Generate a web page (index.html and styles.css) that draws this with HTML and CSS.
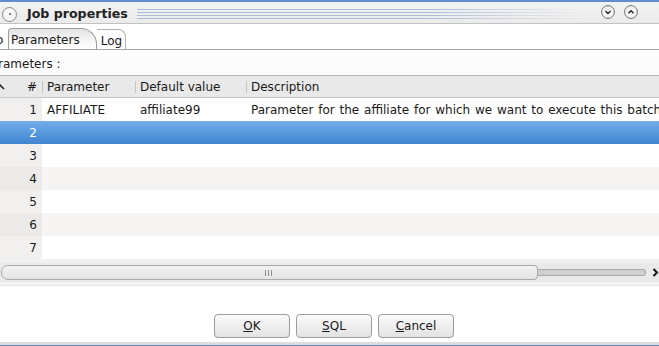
FILE: index.html
```html
<!DOCTYPE html>
<html>
<head>
<meta charset="utf-8">
<link rel="stylesheet" href="styles.css">
</head>
<body>
<div class="window">
  <div class="titlebar">
    <span class="menu-btn"><span class="dot"></span></span>
    <span class="title">Job properties</span>
    <span class="stripes"></span>
    <span class="circ-btn">
      <svg width="14" height="14" viewBox="0 0 14 14"><circle cx="7" cy="7" r="6.4" fill="#f4f4f4" stroke="#6e6e6e"/><path d="M4.5 6 L7 8.5 L9.5 6" fill="none" stroke="#222" stroke-width="1.4"/></svg>
    </span>
    <span class="circ-btn">
      <svg width="14" height="14" viewBox="0 0 14 14"><circle cx="7" cy="7" r="6.4" fill="#f4f4f4" stroke="#6e6e6e"/><path d="M4.5 8.3 L7 5.8 L9.5 8.3" fill="none" stroke="#222" stroke-width="1.4"/></svg>
    </span>
  </div>
  <div class="tabbar">
    <span class="tab tab-cut">o</span>
    <span class="tab tab-active">Parameters</span>
    <span class="tab tab-log">Log</span>
  </div>
  <div class="label"><span class="label-text">Parameters :</span></div>
  <div class="table">
    <div class="row head">
      <div class="cell rh"><svg class="sort" width="6" height="6" viewBox="0 0 6 6"><path d="M0 0 L5 5" stroke="#222" stroke-width="1.6"/></svg>#</div>
      <div class="cell hc">Parameter</div>
      <div class="cell hc">Default value</div>
      <div class="cell hc">Description</div>
    </div>
    <div class="row">
      <div class="cell rh">1</div>
      <div class="cell">AFFILIATE</div>
      <div class="cell">affiliate99</div>
      <div class="cell desc">Parameter for the affiliate for which we want to execute this batch</div>
    </div>
    <div class="row sel">
      <div class="cell rh">2</div><div class="cell"></div><div class="cell"></div><div class="cell"></div>
    </div>
    <div class="row">
      <div class="cell rh">3</div><div class="cell"></div><div class="cell"></div><div class="cell"></div>
    </div>
    <div class="row alt">
      <div class="cell rh">4</div><div class="cell"></div><div class="cell"></div><div class="cell"></div>
    </div>
    <div class="row">
      <div class="cell rh">5</div><div class="cell"></div><div class="cell"></div><div class="cell"></div>
    </div>
    <div class="row alt">
      <div class="cell rh">6</div><div class="cell"></div><div class="cell"></div><div class="cell"></div>
    </div>
    <div class="row">
      <div class="cell rh">7</div><div class="cell"></div><div class="cell"></div><div class="cell"></div>
    </div>
  </div>
  <div class="hscroll">
    <div class="thumb"><span class="grip"></span></div>
    <div class="groove"></div>
    <svg class="sarrow" width="7" height="9" viewBox="0 0 7 9"><path d="M1.5 1 L5 4.5 L1.5 8" fill="none" stroke="#111" stroke-width="2"/></svg>
  </div>
  <div class="buttons">
    <button class="btn"><u>O</u>K</button>
    <button class="btn"><u>S</u>QL</button>
    <button class="btn"><u>C</u>ancel</button>
  </div>
  <div class="bottom"></div>
</div>
</body>
</html>
```
FILE: styles.css
```css
html, body {
  margin: 0;
  padding: 0;
  background: #ffffff;
  overflow: hidden;
}
body {
  width: 659px;
  height: 346px;
  font-family: "DejaVu Sans", sans-serif;
  font-size: 12px;
  color: #1a1a1a;
}
.window {
  display: flex;
  flex-direction: column;
  height: 346px;
}
.titlebar {
  height: 21px;
  border-top: 2px solid #5e8fc8;
  border-bottom: 1px solid #c2c2c2;
  background: linear-gradient(#f3f3f3, #ebebeb);
  display: flex;
  align-items: center;
}
.menu-btn {
  width: 13px;
  height: 13px;
  border: 1px solid #8a8a8a;
  border-radius: 50%;
  background: #f6f6f6;
  margin-left: 2px;
  margin-top: 3px;
  display: flex;
  align-items: center;
  justify-content: center;
}
.dot {
  width: 2px;
  height: 2px;
  background: #555;
  border-radius: 50%;
}
.title {
  font-weight: bold;
  font-size: 12.6px;
  margin-left: 10px;
  color: #222;
  margin-top: 2px;
}
.stripes {
  flex: 1;
  height: 11px;
  margin: 4px 20px 0 9px;
  background: repeating-linear-gradient(to bottom, #a9bdd8 0, #a9bdd8 1px, transparent 1px, transparent 3px);
  -webkit-mask-image: linear-gradient(to right, #000 0%, #000 65%, transparent 100%);
  mask-image: linear-gradient(to right, #000 0%, #000 65%, transparent 100%);
}
.circ-btn {
  width: 14px;
  height: 14px;
  margin-right: 9px;
  margin-top: -1px;
  display: flex;
}
.circ-btn:last-child {
  margin-right: 21px;
}
.tabbar {
  height: 25px;
  border-bottom: 1px solid #a6a6a6;
  display: flex;
  align-items: flex-end;
  background: #ffffff;
}
.tab {
  font-size: 12px;
  line-height: 17px;
  height: 17px;
  padding-top: 3px;
  color: #1a1a1a;
}
.tab-cut {
  margin-left: -4px;
  width: 12px;
}
.tab-active {
  padding: 3px 16px 0 2px;
  border: 1px solid #9c9c9c;
  border-bottom: none;
  border-radius: 4px 16px 0 0;
  background: linear-gradient(#e3e3e3, #f7f7f7 60%, #ffffff);
}
.tab-log {
  padding: 3px 3px 0 4px;
  height: 16px;
  border: 1px solid #b0b0b0;
  border-left: none;
  border-bottom: none;
  border-radius: 0 8px 0 0;
}
.label {
  height: 25px;
  display: flex;
  align-items: center;
  overflow: hidden;
  background: #fcfcfc;
}
.label-text {
  margin-left: -16px;
  margin-top: 2px;
}
.table {
  border-top: 1px solid #b4b4b4;
}
.row {
  display: grid;
  grid-template-columns: 42px 93px 111px 1fr;
  height: 23px;
  background: #ffffff;
}
.row.alt {
  background: #f5f4f2;
}
.cell {
  display: flex;
  align-items: center;
  padding-left: 5px;
  white-space: nowrap;
  overflow: hidden;
}
.desc {
  padding-left: 5px;
  word-spacing: 1px;
}
.rh {
  justify-content: flex-end;
  padding: 0 5px 0 0;
  background: #f1f0ef;
  position: relative;
}
.row.alt .rh {
  background: #ebeae8;
}
.row.head {
  height: 21px;
  background: #e9e9e9;
  border-bottom: 1px solid #c6c6c6;
}
.row.head .rh {
  background: #e9e9e9;
}
.hc {
  position: relative;
  padding-left: 5px;
}
.hc::before {
  content: "";
  position: absolute;
  left: 0;
  top: 5px;
  bottom: 4px;
  width: 1px;
  background: #c4c4c4;
}
.sort {
  position: absolute;
  left: -1px;
  top: 8px;
}
.row.sel {
  background: linear-gradient(#73adea, #3f84d0);
  color: #ffffff;
}
.row.sel .rh {
  background: transparent;
  color: #ffffff;
}
.hscroll {
  height: 26px;
  background: linear-gradient(#f0f0f0 0, #f0f0f0 4px, #e9e9e9 4px, #e9e9e9 23px, #f3f3f3 23px);
  display: flex;
  align-items: center;
  border-bottom: 1px solid #e3e3e3;
}
.thumb {
  width: 535px;
  height: 13px;
  margin-left: 1px;
  margin-top: 1px;
  border: 1px solid #a9a9a9;
  border-radius: 7px 4px 4px 7px;
  background: linear-gradient(#f2f2f2, #e4e4e4);
  display: flex;
  align-items: center;
  justify-content: center;
}
.grip {
  width: 7px;
  height: 6px;
  margin-left: -2px;
  background: repeating-linear-gradient(to right, #8a8a8a 0, #8a8a8a 1px, transparent 1px, transparent 3px);
}
.groove {
  flex: 1;
  height: 5px;
  margin-top: 1px;
  border: 1px solid #a8a8a8;
  border-left: none;
  border-radius: 0 3px 3px 0;
  background: #d0d0d0;
}
.sarrow {
  margin: 1px 0 0 6px;
}
.buttons {
  flex: 1;
  display: flex;
  justify-content: center;
  align-items: flex-start;
  gap: 6px;
  padding-top: 28px;
  padding-left: 9px;
  background: #ffffff;
}
.btn {
  width: 76px;
  height: 24px;
  border: 1px solid #9c9c9c;
  border-radius: 4px;
  background: linear-gradient(#fafafa, #e3e3e3);
  font-family: "DejaVu Sans", sans-serif;
  font-size: 12px;
  color: #1a1a1a;
  padding: 0;
}
.bottom {
  height: 3px;
  background: #dedede;
  border-bottom: 1px solid #5a88c0;
}
```
